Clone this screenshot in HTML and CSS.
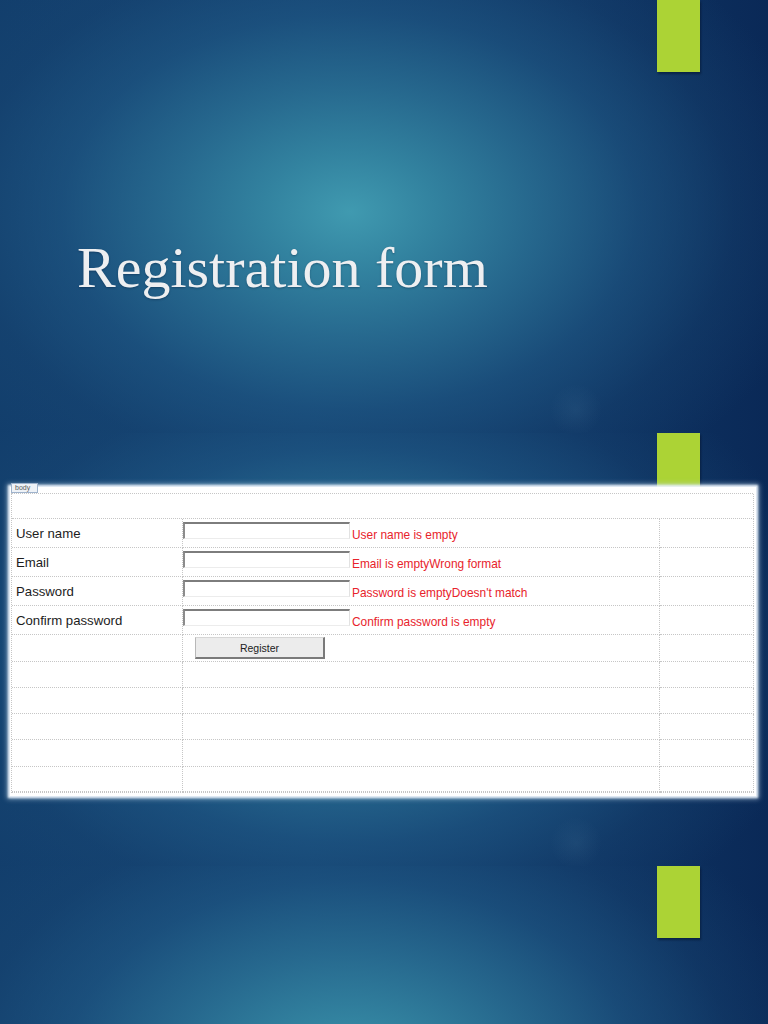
FILE: index.html
```html
<!DOCTYPE html>
<html lang="en">
<head>
<meta charset="utf-8">
<title>Registration form</title>
<link rel="stylesheet" href="styles.css">
</head>
<body>
<div class="deck">
  <section class="slide slide-title">
    <div class="accent"></div>
    <h1 class="title">Registration form</h1>
  </section>

  <section class="slide slide-form">
    <div class="accent"></div>
    <div class="shot">
      <span class="tag">body</span>
      <div class="grid">
        <div class="cell span3"></div>

        <div class="cell label">User name</div>
        <div class="cell field-cell"><span class="field"></span><span class="error">User name is empty</span></div>
        <div class="cell"></div>

        <div class="cell label">Email</div>
        <div class="cell field-cell"><span class="field"></span><span class="error">Email is emptyWrong format</span></div>
        <div class="cell"></div>

        <div class="cell label">Password</div>
        <div class="cell field-cell"><span class="field"></span><span class="error">Password is emptyDoesn't match</span></div>
        <div class="cell"></div>

        <div class="cell label">Confirm password</div>
        <div class="cell field-cell"><span class="field"></span><span class="error">Confirm password is empty</span></div>
        <div class="cell"></div>

        <div class="cell"></div>
        <div class="cell button-cell"><span class="button">Register</span></div>
        <div class="cell"></div>

        <div class="cell"></div><div class="cell"></div><div class="cell"></div>
        <div class="cell"></div><div class="cell"></div><div class="cell"></div>
        <div class="cell"></div><div class="cell"></div><div class="cell"></div>
        <div class="cell"></div><div class="cell"></div><div class="cell"></div>
        <div class="cell"></div><div class="cell"></div><div class="cell"></div>
        <div class="cell"></div><div class="cell"></div><div class="cell"></div>
      </div>
    </div>
  </section>

  <section class="slide slide-blank">
    <div class="accent"></div>
  </section>
</div>
</body>
</html>
```

FILE: styles.css
```css
* {
  box-sizing: border-box;
}

html, body {
  margin: 0;
  padding: 0;
}

body {
  width: 768px;
  height: 1024px;
  overflow: hidden;
  background: #0d3160;
  font-family: "Liberation Sans", Arial, sans-serif;
}

.deck {
  display: flex;
  flex-direction: column;
}

.slide {
  position: relative;
  height: 433px;
  flex: none;
  overflow: hidden;
  background:
    radial-gradient(circle 26px at 576px 410px, rgba(120, 170, 200, 0.09), rgba(120, 170, 200, 0) 100%),
    radial-gradient(ellipse 480px 330px at 350px 212px,
      rgba(64, 154, 176, 1) 0%,
      rgba(52, 134, 162, 0.95) 18%,
      rgba(42, 112, 148, 0.85) 38%,
      rgba(32, 90, 134, 0.6) 60%,
      rgba(26, 74, 118, 0.3) 80%,
      rgba(20, 60, 105, 0) 100%),
    linear-gradient(90deg, #123e6c 0%, #134070 40%, #0f3564 75%, #0a2957 100%);
}

.accent {
  position: absolute;
  top: 0;
  left: 657px;
  width: 43px;
  height: 72px;
  background: #acd335;
  box-shadow: 1px 2px 2px rgba(0, 10, 30, 0.45);
  z-index: 0;
}

/* Title slide */
.slide-title {
  padding: 235px 0 0 77px;
}

.title {
  margin: 0;
  font-family: "Liberation Serif", "Times New Roman", serif;
  font-weight: normal;
  font-size: 58px;
  line-height: 66px;
  color: #eeeff1;
  text-shadow: 0 1px 2px rgba(0, 20, 50, 0.35);
  position: relative;
}

/* Form slide */
.slide-form {
  padding: 54px 0 0 10px;
}

.shot {
  position: relative;
  z-index: 1;
  width: 746px;
  height: 309px;
  padding: 6px 0 0 1px;
  background: #ffffff;
  box-shadow: 0 0 2px 2px rgba(235, 242, 250, 0.95), 0 0 5px 3px rgba(200, 220, 240, 0.6);
}

.tag {
  position: absolute;
  left: 1px;
  top: -4px;
  width: 27px;
  height: 10px;
  border: 1px solid #9fb3cc;
  background: #eef2f7;
  font-size: 7px;
  line-height: 8px;
  color: #5a5a5a;
  padding-left: 3px;
}

.grid {
  display: grid;
  width: 742px;
  grid-template-columns: 171px 477px 94px;
  grid-template-rows: 25px 29px 29px 29px 29px 27px 26px 26px 26px 27px 25px;
  border-top: 1px dotted #c6c6c6;
  border-left: 1px dotted #c6c6c6;
}

.cell {
  border-right: 1px dotted #c6c6c6;
  border-bottom: 1px dotted #c6c6c6;
}

.span3 {
  grid-column: 1 / span 3;
}

.label {
  padding: 7px 0 0 4px;
  font-size: 13.2px;
  line-height: 16px;
  color: #1c1c1c;
  white-space: nowrap;
}

.field-cell {
  display: flex;
  align-items: baseline;
  padding-top: 3px;
}

.field {
  display: block;
  width: 167px;
  height: 17px;
  flex: none;
  background: #ffffff;
  border-top: 2px solid #7d7d7d;
  border-left: 2px solid #8c8c8c;
  border-right: 1px solid #e2e2e2;
  border-bottom: 1px solid #ececec;
}

.error {
  margin-left: 2px;
  font-size: 11.9px;
  line-height: 14px;
  color: #e8232b;
  white-space: nowrap;
}

.button-cell {
  padding: 2px 0 0 12px;
}

.button {
  display: flex;
  align-items: center;
  justify-content: center;
  width: 130px;
  height: 22px;
  background: #ececec;
  border-top: 1px solid #d6d6d6;
  border-left: 1px solid #b8b8b8;
  border-right: 2px solid #7a7a7a;
  border-bottom: 2px solid #7a7a7a;
  font-size: 10.5px;
  color: #222222;
}

.slide-blank {
  height: 433px;
}
```
